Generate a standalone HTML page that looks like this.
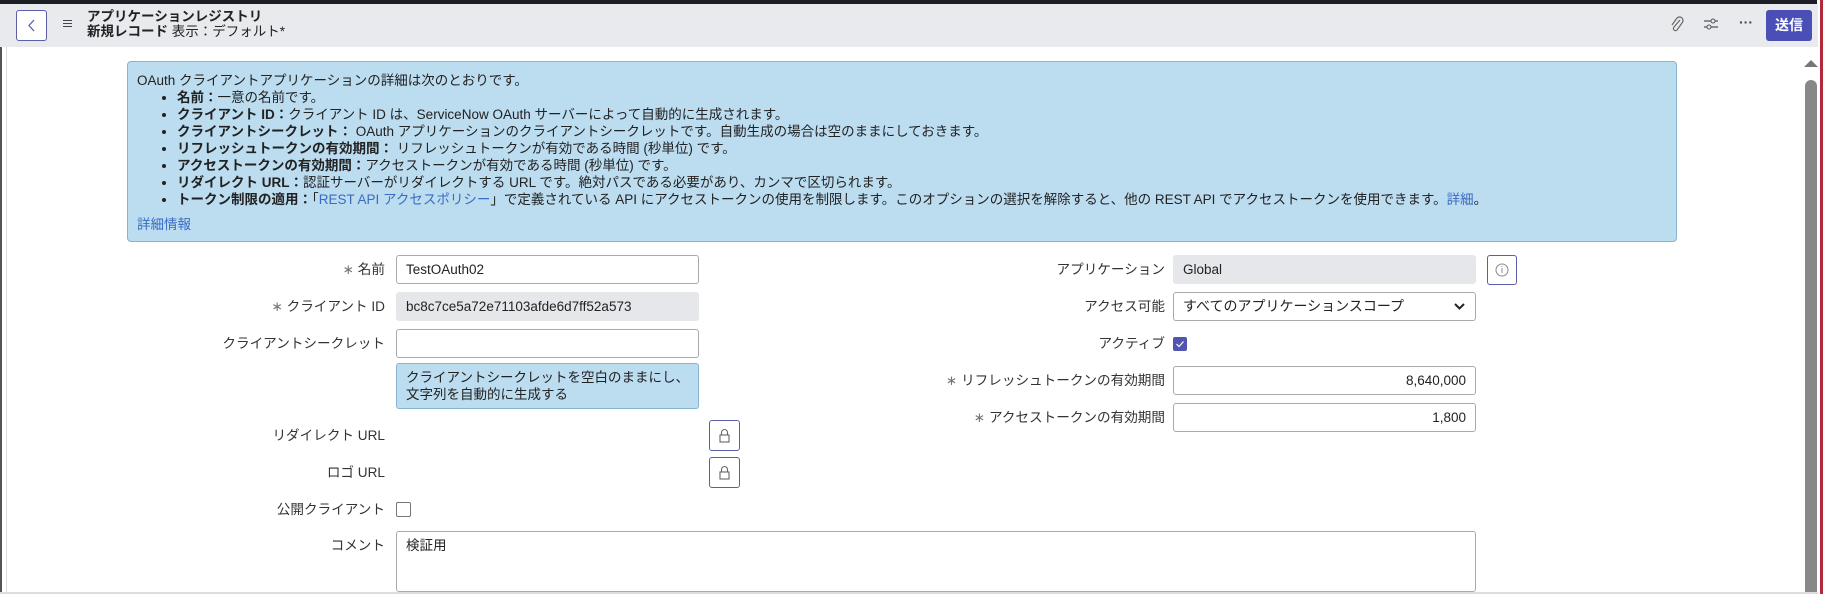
<!DOCTYPE html>
<html><head><meta charset="utf-8"><style>
*{box-sizing:border-box;margin:0;padding:0}
body{width:1827px;height:594px;overflow:hidden;background:#fff;font-family:"Liberation Sans","Noto Sans CJK JP",sans-serif;color:#222;position:relative}
.abs{position:absolute}
.top{left:0;top:0;width:1817px;height:4px;background:#1b1e24}
.hdr{left:0;top:4px;width:1818px;height:43px;background:#e9eaed}
.back{left:16px;top:10px;width:31px;height:31px;border:1px solid #5a5fa8;border-radius:3px;background:#fff}
.ttl{left:87px;top:9px;font-size:13.5px;line-height:15px;font-weight:bold;color:#222;white-space:nowrap}
.ttl span{font-weight:normal}
.btn{left:1766px;top:10px;width:46px;height:31px;background:#4a4fb5;border-radius:3px;color:#fff;font-weight:bold;font-size:14px;text-align:center;line-height:31px}
.info{left:127px;top:61px;width:1550px;height:181px;background:#bcdcf0;border:1px solid #89b4d1;border-radius:4px;padding:10px 0 0 9px;font-size:13.5px;line-height:17px;color:#222;white-space:nowrap}
.info ul{margin-left:40px}
.info b{font-weight:bold}
a{color:#3a6bc4;text-decoration:none}
.lbl{font-size:13.6px;text-align:right;color:#333;line-height:29px;white-space:nowrap}
.inp{border:1px solid #aaa;border-radius:3px;height:29px;font-size:13.5px;line-height:27px;padding:0 9px;background:#fff;white-space:nowrap}
.ro{background:#e6e7ea;border-color:#e6e7ea}
.lock{width:31px;height:31px;border:1px solid #5a5fa8;border-radius:3px;background:#fff}
.ast{color:#777}
</style></head><body>
<div class="abs" style="left:0;top:4px;width:2px;height:590px;background:#555"></div>
<div class="abs" style="left:6px;top:47px;width:1px;height:547px;background:#ddd"></div>
<div class="abs top"></div>
<div class="abs hdr"></div>
<div class="abs back"><svg width="29" height="29"><path d="M17 9 L12 14.5 L17 20" stroke="#5a5fa8" stroke-width="1.3" fill="none"/></svg></div>
<div class="abs" style="left:63px;top:20px;width:9px;height:7px;border-top:1px solid #444;border-bottom:1px solid #444"><div style="margin-top:2px;height:1px;background:#444"></div></div>
<div class="abs ttl">アプリケーションレジストリ<br>新規レコード <span>表示：デフォルト*</span></div>
<svg class="abs" style="left:1670px;top:16px" width="14" height="16"><path d="M10 4 L4 11 a2 2 0 0 0 3 3 L12 7 a3.5 3.5 0 0 0 -5 -5 L2 9" stroke="#666" stroke-width="1.2" fill="none"/></svg>
<svg class="abs" style="left:1704px;top:18px" width="14" height="12"><path d="M0 3h14M0 9h14" stroke="#555" stroke-width="1.2"/><circle cx="9" cy="3" r="2" fill="#e9eaed" stroke="#555"/><circle cx="5" cy="9" r="2" fill="#e9eaed" stroke="#555"/></svg>
<div class="abs" style="left:1739px;top:14px;font-size:14px;font-weight:bold;color:#444">···</div>
<div class="abs btn">送信</div>
<div class="abs" style="left:1820px;top:0;width:3px;height:594px;background:#b02a3a"></div>
<div class="abs" style="left:1804px;top:60px;width:0;height:0;border-left:7px solid transparent;border-right:7px solid transparent;border-bottom:7px solid #777"></div>
<div class="abs" style="left:1805px;top:80px;width:12px;height:514px;background:#888;border-radius:6px 6px 0 0"></div>
<div class="abs" style="left:0;top:592px;width:1818px;height:2px;background:#ddd"></div>

<div class="abs info">OAuth クライアントアプリケーションの詳細は次のとおりです。
<ul>
<li><b>名前：</b>一意の名前です。</li>
<li><b>クライアント ID：</b>クライアント ID は、ServiceNow OAuth サーバーによって自動的に生成されます。</li>
<li><b>クライアントシークレット：</b> OAuth アプリケーションのクライアントシークレットです。自動生成の場合は空のままにしておきます。</li>
<li><b>リフレッシュトークンの有効期間：</b> リフレッシュトークンが有効である時間 (秒単位) です。</li>
<li><b>アクセストークンの有効期間：</b>アクセストークンが有効である時間 (秒単位) です。</li>
<li><b>リダイレクト URL：</b>認証サーバーがリダイレクトする URL です。絶対パスである必要があり、カンマで区切られます。</li>
<li><b>トークン制限の適用：</b>「<a>REST API アクセスポリシー</a>」で定義されている API にアクセストークンの使用を制限します。このオプションの選択を解除すると、他の REST API でアクセストークンを使用できます。<a>詳細</a>。</li>
</ul>
<div style="margin-top:8px"><a>詳細情報</a></div>
</div>

<div class="abs lbl" style="left:150px;top:255px;width:235px"><span class="ast">∗</span> 名前</div>
<div class="abs inp" style="left:396px;top:255px;width:303px">TestOAuth02</div>
<div class="abs lbl" style="left:150px;top:292px;width:235px"><span class="ast">∗</span> クライアント ID</div>
<div class="abs inp ro" style="left:396px;top:292px;width:303px">bc8c7ce5a72e71103afde6d7ff52a573</div>
<div class="abs lbl" style="left:150px;top:329px;width:235px">クライアントシークレット</div>
<div class="abs inp" style="left:396px;top:329px;width:303px"></div>
<div class="abs" style="left:396px;top:363px;width:303px;height:46px;background:#bcdcf0;border:1px solid #89b4d1;border-radius:3px;font-size:13.5px;line-height:17px;padding:5px 9px;white-space:nowrap">クライアントシークレットを空白のままにし、<br>文字列を自動的に生成する</div>
<div class="abs lbl" style="left:150px;top:421px;width:235px">リダイレクト URL</div>
<div class="abs lock" style="left:709px;top:420px"><svg width="29" height="29"><rect x="10" y="14" width="9" height="7" fill="none" stroke="#666" stroke-width="1.1"/><path d="M11.5 14v-2.5a3 3 0 0 1 6 0V14" fill="none" stroke="#666" stroke-width="1.1"/></svg></div>
<div class="abs lbl" style="left:150px;top:458px;width:235px">ロゴ URL</div>
<div class="abs lock" style="left:709px;top:457px"><svg width="29" height="29"><rect x="10" y="14" width="9" height="7" fill="none" stroke="#666" stroke-width="1.1"/><path d="M11.5 14v-2.5a3 3 0 0 1 6 0V14" fill="none" stroke="#666" stroke-width="1.1"/></svg></div>
<div class="abs lbl" style="left:150px;top:495px;width:235px">公開クライアント</div>
<div class="abs" style="left:396px;top:502px;width:15px;height:15px;border:1px solid #777;border-radius:2px"></div>
<div class="abs lbl" style="left:150px;top:531px;width:235px">コメント</div>
<div class="abs inp" style="left:396px;top:531px;width:1080px;height:61px;line-height:22px;padding-top:3px">検証用</div>

<div class="abs lbl" style="left:850px;top:255px;width:315px">アプリケーション</div>
<div class="abs inp ro" style="left:1173px;top:255px;width:303px">Global</div>
<div class="abs lock" style="left:1487px;top:255px;width:30px;height:30px"><svg width="28" height="28"><circle cx="14" cy="14" r="6" fill="none" stroke="#888"/><path d="M14 12v5M14 10v1" stroke="#888"/></svg></div>
<div class="abs lbl" style="left:850px;top:292px;width:315px">アクセス可能</div>
<div class="abs inp" style="left:1173px;top:292px;width:303px;font-size:14px">すべてのアプリケーションスコープ<svg class="abs" style="right:10px;top:10px" width="11" height="8"><path d="M1 1l4.5 4.5L10 1" stroke="#222" stroke-width="2" fill="none"/></svg></div>
<div class="abs lbl" style="left:850px;top:329px;width:315px">アクティブ</div>
<div class="abs" style="left:1173px;top:337px;width:14px;height:14px;background:#5055b0;border-radius:2px"><svg width="14" height="14"><path d="M3.5 7l2.5 2.5L10.5 4.5" stroke="#fff" stroke-width="1.2" fill="none"/></svg></div>
<div class="abs lbl" style="left:850px;top:366px;width:315px"><span class="ast">∗</span> リフレッシュトークンの有効期間</div>
<div class="abs inp" style="left:1173px;top:366px;width:303px;text-align:right">8,640,000</div>
<div class="abs lbl" style="left:850px;top:403px;width:315px"><span class="ast">∗</span> アクセストークンの有効期間</div>
<div class="abs inp" style="left:1173px;top:403px;width:303px;text-align:right">1,800</div>
</body></html>
